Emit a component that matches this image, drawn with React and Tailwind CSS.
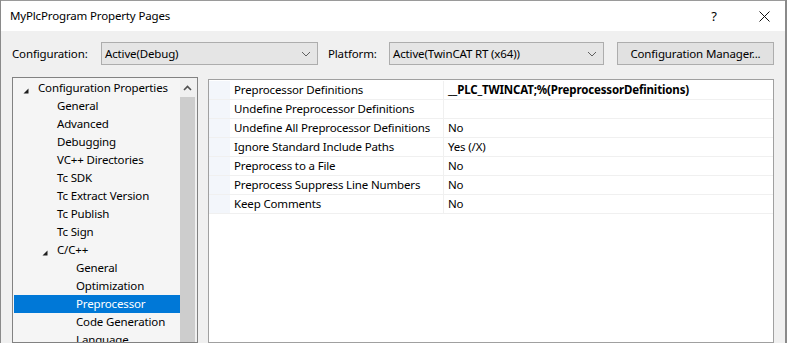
import React from "react";

const F = { fontFamily: "'Noto Sans', 'Open Sans', sans-serif" };

function Tri() {
  return (
    <svg width="6" height="6" viewBox="0 0 6 6" className="shrink-0">
      <polygon points="5.5,0.5 5.5,5.5 0.5,5.5" fill="#1e1e1e" />
    </svg>
  );
}

function Chevron() {
  return (
    <svg width="10" height="6" viewBox="0 0 10 6">
      <polyline points="1,1 5,5 9,1" fill="none" stroke="#606060" strokeWidth="1" />
    </svg>
  );
}

const tree = [
  { t: "Configuration Properties", lvl: 0, exp: true },
  { t: "General", lvl: 1 },
  { t: "Advanced", lvl: 1 },
  { t: "Debugging", lvl: 1 },
  { t: "VC++ Directories", lvl: 1 },
  { t: "Tc SDK", lvl: 1 },
  { t: "Tc Extract Version", lvl: 1 },
  { t: "Tc Publish", lvl: 1 },
  { t: "Tc Sign", lvl: 1 },
  { t: "C/C++", lvl: 1, exp: true },
  { t: "General", lvl: 2 },
  { t: "Optimization", lvl: 2 },
  { t: "Preprocessor", lvl: 2, sel: true },
  { t: "Code Generation", lvl: 2 },
  { t: "Language", lvl: 2 },
];

const props = [
  ["Preprocessor Definitions", "__PLC_TWINCAT;%(PreprocessorDefinitions)", true],
  ["Undefine Preprocessor Definitions", ""],
  ["Undefine All Preprocessor Definitions", "No"],
  ["Ignore Standard Include Paths", "Yes (/X)"],
  ["Preprocess to a File", "No"],
  ["Preprocess Suppress Line Numbers", "No"],
  ["Keep Comments", "No"],
];

export default function App() {
  return (
    <div
      style={F}
      className="w-[787px] h-[343px] overflow-hidden bg-[#f0f0f0] border-l border-r-2 border-[#8a8a8a] flex flex-col text-[11.5px] tracking-[-0.15px] text-black leading-none whitespace-nowrap"
    >
      {/* title bar */}
      <div className="h-[31px] shrink-0 bg-white border-t border-[#9a9a9a] flex items-center pl-[9px]">
        <span className="flex-1">MyPlcProgram Property Pages</span>
        <span className="w-[10px] text-center mr-[40px] text-[13px]">?</span>
        <svg width="11" height="11" viewBox="0 0 11 11" className="mr-[15px]">
          <path d="M0.5 0.5 L10.5 10.5 M10.5 0.5 L0.5 10.5" stroke="#111" strokeWidth="1" />
        </svg>
      </div>

      {/* config row */}
      <div className="flex items-center pt-[11px] h-[34px] shrink-0 pl-[11px]">
        <span className="w-[89px]">Configuration:</span>
        <div className="w-[217px] h-[23px] bg-[#e5e5e5] border border-[#adadad] flex items-center pl-[3px] pr-[6px]">
          <span className="flex-1">Active(Debug)</span>
          <Chevron />
        </div>
        <span className="ml-[10px] w-[61px]">Platform:</span>
        <div className="w-[215px] h-[23px] bg-[#e5e5e5] border border-[#adadad] flex items-center pl-[3px] pr-[6px]">
          <span className="flex-1">Active(TwinCAT RT (x64))</span>
          <Chevron />
        </div>
        <div className="ml-[13px] w-[157px] h-[23px] bg-[#e1e1e1] border border-[#adadad] flex items-center justify-center">
          Configuration Manager...
        </div>
      </div>

      {/* main */}
      <div className="flex flex-1 pt-[12px] pl-[11px] min-h-0">
        {/* tree */}
        <div className="w-[186px] border border-[#828282] bg-[#f5f5f5] flex min-h-0">
          <div className="flex-1 pt-[1px] pl-[1px] overflow-hidden">
            {tree.map((it, i) => (
              <div
                key={i}
                className={`h-[18px] flex items-center ${it.sel ? "bg-[#0078d7] text-white" : ""} ${
                  it.lvl === 0 ? "pl-[9px]" : it.lvl === 1 ? "pl-[28px]" : "pl-[47px]"
                }`}
              >
                <span className="w-[15px] h-[12px] flex items-end shrink-0">
                  {it.exp ? <Tri /> : null}
                </span>
                <span>{it.t}</span>
              </div>
            ))}
          </div>
          <div className="w-[17px] bg-[#f0f0f0] flex flex-col">
            <div className="h-[19px] flex items-center justify-center pr-[2px]">
              <svg width="9" height="6" viewBox="0 0 9 6">
                <polyline points="1,5 4.5,1.5 8,5" fill="none" stroke="#505050" strokeWidth="1.6" />
              </svg>
            </div>
            <div className="flex-1 w-[15px] bg-[#cdcdcd]" />
          </div>
        </div>

        {/* property grid */}
        <div className="ml-[10px] mt-[2px] w-[566px] border border-[#a0a0a0] bg-white pt-[1px] self-stretch">
          {props.map(([n, v, b], i) => (
            <div key={i} className="flex h-[19px] border-b border-[#f0f0f0]">
              <div className="w-[21px] bg-[#f3f6fb]" />
              <div className="w-[214px] flex items-center pl-[4px] border-r border-[#f0f0f0]">{n}</div>
              <div className={`flex-1 flex items-center pl-[4px] ${b ? "font-bold" : ""}`}>{v}</div>
            </div>
          ))}
        </div>
      </div>
    </div>
  );
}
